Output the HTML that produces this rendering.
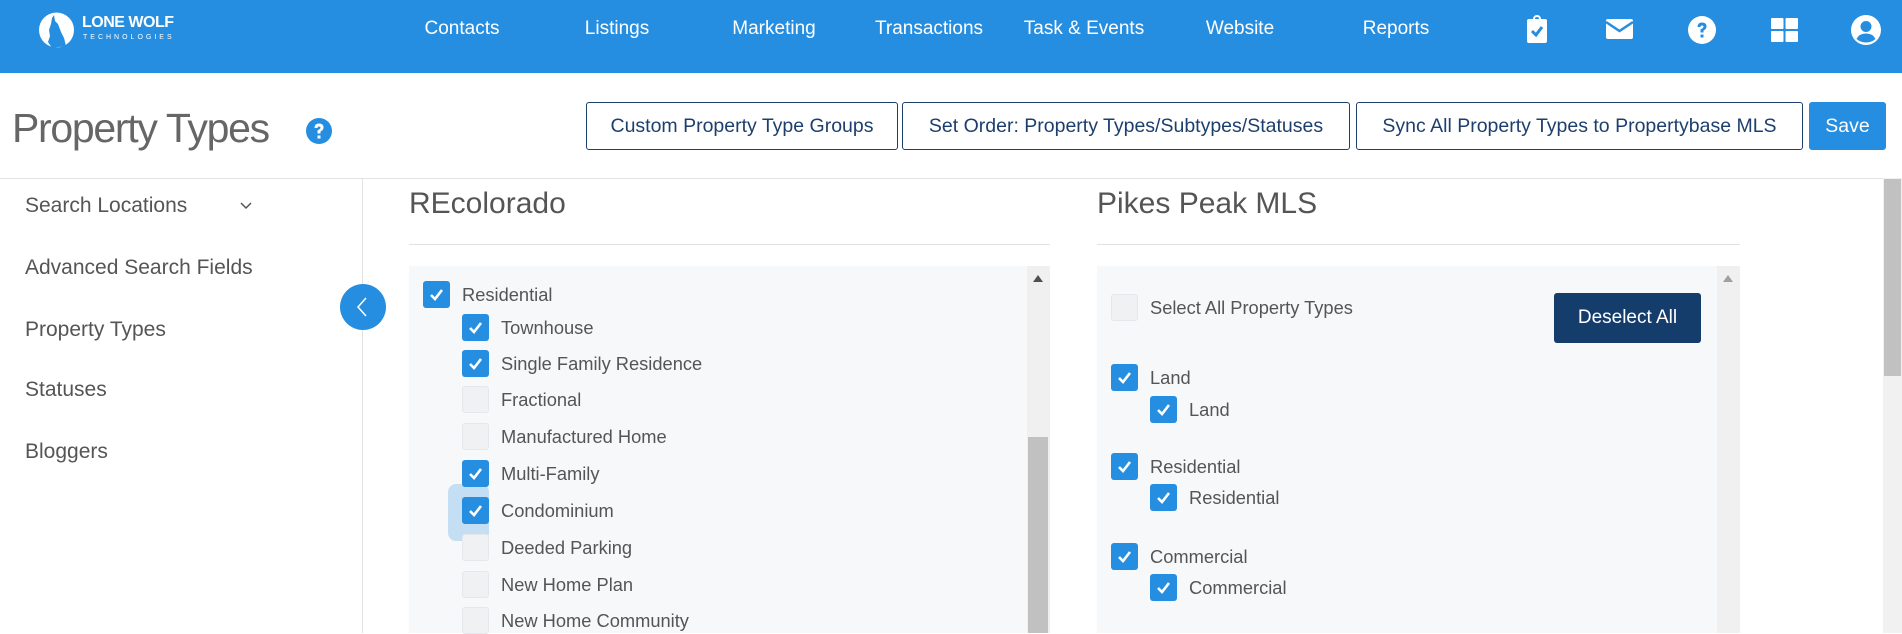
<!DOCTYPE html>
<html><head><meta charset="utf-8"><style>
*{margin:0;padding:0;box-sizing:border-box}
body{width:1902px;height:633px;overflow:hidden;background:#fff;font-family:"Liberation Sans",sans-serif;position:relative;color:#555}
.a{position:absolute;white-space:nowrap}
.hdr{left:0;top:0;width:1902px;height:73px;background:#268ee0}
.nav{top:18px;color:#fff;font-size:19px;transform:translateX(-50%)}
.btn{top:102px;height:48px;border:1px solid #1d3f6e;border-radius:3px;font-size:19.5px;color:#1d3f6e;line-height:46px;text-align:center;background:#fff}
.side{left:25px;font-size:21px;color:#555}
.cb{position:absolute;width:27px;height:27px;border-radius:3px;background:#268ee0}
.cb svg{position:absolute;left:6px;top:7px}
.cb.u{background:#f0f1f3;border:1px solid #e5e7ea}
.lb{position:absolute;font-size:18.3px;color:#555;white-space:nowrap}
</style></head><body>
<div class="a hdr"></div>
<svg class="a" style="left:38px;top:12px" width="37" height="36" viewBox="0 0 37 36"><circle cx="18.5" cy="18" r="17.5" fill="#fff"/><path d="M14 6 L16 3 L17 9 L20 12 L23 20 L26 26 L28 34 L14 36 L10 30 L12 24 L11 18 L13 12 Z" fill="#268ee0"/></svg>
<div class="a" style="left:82px;top:14px;color:#fff;font-size:16px;font-weight:bold;letter-spacing:-0.5px">LONE WOLF</div>
<div class="a" style="left:83px;top:34px;color:#fff;font-size:7px;letter-spacing:3px">TECHNOLOGIES</div>
<div class="a nav" style="left:462px">Contacts</div>
<div class="a nav" style="left:617px">Listings</div>
<div class="a nav" style="left:774px">Marketing</div>
<div class="a nav" style="left:929px">Transactions</div>
<div class="a nav" style="left:1084px">Task &amp; Events</div>
<div class="a nav" style="left:1240px">Website</div>
<div class="a nav" style="left:1396px">Reports</div>
<svg class="a" style="left:1526px;top:15px" width="22" height="29" viewBox="0 0 22 29"><rect x="1" y="4" width="20" height="24" rx="2" fill="#fff"/><circle cx="11" cy="4" r="3" fill="none" stroke="#fff" stroke-width="2"/><path d="M6 16 L10 20 L16 12" fill="none" stroke="#268ee0" stroke-width="3"/></svg>
<svg class="a" style="left:1606px;top:19px" width="27" height="20" viewBox="0 0 27 20"><rect width="27" height="20" rx="2" fill="#fff"/><path d="M0 3 L13.5 12 L27 3" fill="none" stroke="#268ee0" stroke-width="2.5"/></svg>
<svg class="a" style="left:1688px;top:16px" width="28" height="28" viewBox="0 0 28 28"><circle cx="14" cy="14" r="14" fill="#fff"/><path d="M9.5 11 Q9.5 6.5 14 6.5 Q18.5 6.5 18.5 10.5 Q18.5 13 15.5 14.5 L15.5 16.5 L12.5 16.5 L12.5 13.5 Q15.5 12 15.5 10.5 Q15.5 9.5 14 9.5 Q12.5 9.5 12.5 11 Z" fill="#268ee0"/><rect x="12.5" y="18.5" width="3" height="3" fill="#268ee0"/></svg>
<svg class="a" style="left:1771px;top:18px" width="27" height="24" viewBox="0 0 27 24"><rect width="12.5" height="11" rx="1" fill="#fff"/><rect x="14.5" width="12.5" height="11" rx="1" fill="#fff"/><rect y="13" width="12.5" height="11" rx="1" fill="#fff"/><rect x="14.5" y="13" width="12.5" height="11" rx="1" fill="#fff"/></svg>
<svg class="a" style="left:1851px;top:15px" width="30" height="30" viewBox="0 0 30 30"><circle cx="15" cy="15" r="15" fill="#fff"/><circle cx="15" cy="11.5" r="5.5" fill="#268ee0"/><path d="M5.5 24 Q8 18.5 15 18.5 Q22 18.5 24.5 24 Q20.5 27.5 15 27.5 Q9.5 27.5 5.5 24Z" fill="#268ee0"/></svg>

<div class="a" style="left:12px;top:105px;font-size:41px;color:#666;letter-spacing:-1.3px;font-weight:300">Property Types</div>
<svg class="a" style="left:305px;top:117px" width="28" height="28" viewBox="0 0 28 28"><circle cx="14" cy="14" r="13" fill="#268ee0"/><path d="M9.5 11 Q9.5 6.5 14 6.5 Q18.5 6.5 18.5 10.5 Q18.5 13 15.5 14.5 L15.5 16.5 L12.5 16.5 L12.5 13.5 Q15.5 12 15.5 10.5 Q15.5 9.5 14 9.5 Q12.5 9.5 12.5 11 Z" fill="#fff"/><rect x="12.5" y="18.5" width="3" height="3" fill="#fff"/></svg>
<div class="a btn" style="left:586px;width:312px">Custom Property Type Groups</div>
<div class="a btn" style="left:902px;width:448px">Set Order: Property Types/Subtypes/Statuses</div>
<div class="a btn" style="left:1356px;width:447px">Sync All Property Types to Propertybase MLS</div>
<div class="a btn" style="left:1809px;width:77px;background:#268ee0;border-color:#268ee0;color:#fff">Save</div>
<div class="a" style="left:0;top:178px;width:1883px;height:1px;background:#e2e2e2"></div>

<div class="a" style="left:362px;top:178px;width:1px;height:455px;background:#e2e2e2"></div>
<div class="a side" style="top:194px">Search Locations</div>
<svg class="a" style="left:240px;top:202px" width="12" height="8" viewBox="0 0 12 8"><path d="M1 1 L6 6 L11 1" fill="none" stroke="#555" stroke-width="1.5"/></svg>
<div class="a side" style="top:256px">Advanced Search Fields</div>
<div class="a side" style="top:318px">Property Types</div>
<div class="a side" style="top:378px">Statuses</div>
<div class="a side" style="top:440px">Bloggers</div>
<div class="a" style="left:340px;top:284px;width:46px;height:46px;border-radius:50%;background:#268ee0"></div>
<svg class="a" style="left:356px;top:296px" width="12" height="22" viewBox="0 0 12 22"><path d="M10 2 L2 11 L10 20" fill="none" stroke="#fff" stroke-width="1.5"/></svg>

<div class="a" style="left:409px;top:187px;font-size:30px;color:#555">REcolorado</div>
<div class="a" style="left:409px;top:244px;width:641px;height:1px;background:#e2e2e2"></div>
<div class="a" style="left:409px;top:266px;width:641px;height:367px;background:#f7f8fa"></div>
<div class="a" style="left:1027px;top:266px;width:23px;height:367px;background:#f0f0f0"></div>
<div class="a" style="left:1028px;top:437px;width:20px;height:196px;background:#c1c1c1"></div>
<svg class="a" style="left:1033px;top:275px" width="10" height="7"><path d="M0 7 L5 0 L10 7Z" fill="#505050"/></svg>
<div class="a" style="left:448px;top:484px;width:41px;height:57px;border-radius:8px;background:#c4dff4"></div>

<div class="a" style="left:1883px;top:178px;width:19px;height:455px;background:#f1f1f1"></div>
<div class="a" style="left:1884px;top:179px;width:17px;height:197px;background:#c1c1c1"></div>

<div class="a" style="left:1097px;top:187px;font-size:30px;color:#555">Pikes Peak MLS</div>
<div class="a" style="left:1097px;top:244px;width:643px;height:1px;background:#e2e2e2"></div>
<div class="a" style="left:1097px;top:266px;width:643px;height:367px;background:#f7f8fa"></div>
<div class="a" style="left:1717px;top:266px;width:23px;height:367px;background:#f0f0f0"></div>
<svg class="a" style="left:1723px;top:275px" width="10" height="7"><path d="M0 7 L5 0 L10 7Z" fill="#a0a0a0"/></svg>
<div class="a" style="left:1554px;top:293px;width:147px;height:50px;border-radius:3px;background:#143d6b;color:#fff;font-size:19px;line-height:50px;text-align:center">Deselect All</div>

<div id="cbs"></div>
<script>
var ck='<svg width="15" height="13" viewBox="0 0 15 13"><path d="M2 7 L6 11 L13 2" fill="none" stroke="#fff" stroke-width="2.6"/></svg>';
var items=[
[423,295,1,"Residential"],[462,328,1,"Townhouse"],[462,364,1,"Single Family Residence"],[462,400,0,"Fractional"],[462,437,0,"Manufactured Home"],[462,474,1,"Multi-Family"],[462,511,1,"Condominium"],[462,548,0,"Deeded Parking"],[462,585,0,"New Home Plan"],[462,621,0,"New Home Community"],
[1111,308,0,"Select All Property Types"],[1111,378,1,"Land"],[1150,410,1,"Land"],[1111,467,1,"Residential"],[1150,498,1,"Residential"],[1111,557,1,"Commercial"],[1150,588,1,"Commercial"]];
var h='';
items.forEach(function(i){
h+='<div class="cb'+(i[2]?'':' u')+'" style="left:'+i[0]+'px;top:'+(i[1]-14)+'px">'+(i[2]?ck:'')+'</div>';
h+='<div class="lb" style="left:'+(i[0]+39)+'px;top:'+(i[1]-11)+'px">'+i[3]+'</div>';
});
document.getElementById('cbs').innerHTML=h;
</script>
</body></html>
